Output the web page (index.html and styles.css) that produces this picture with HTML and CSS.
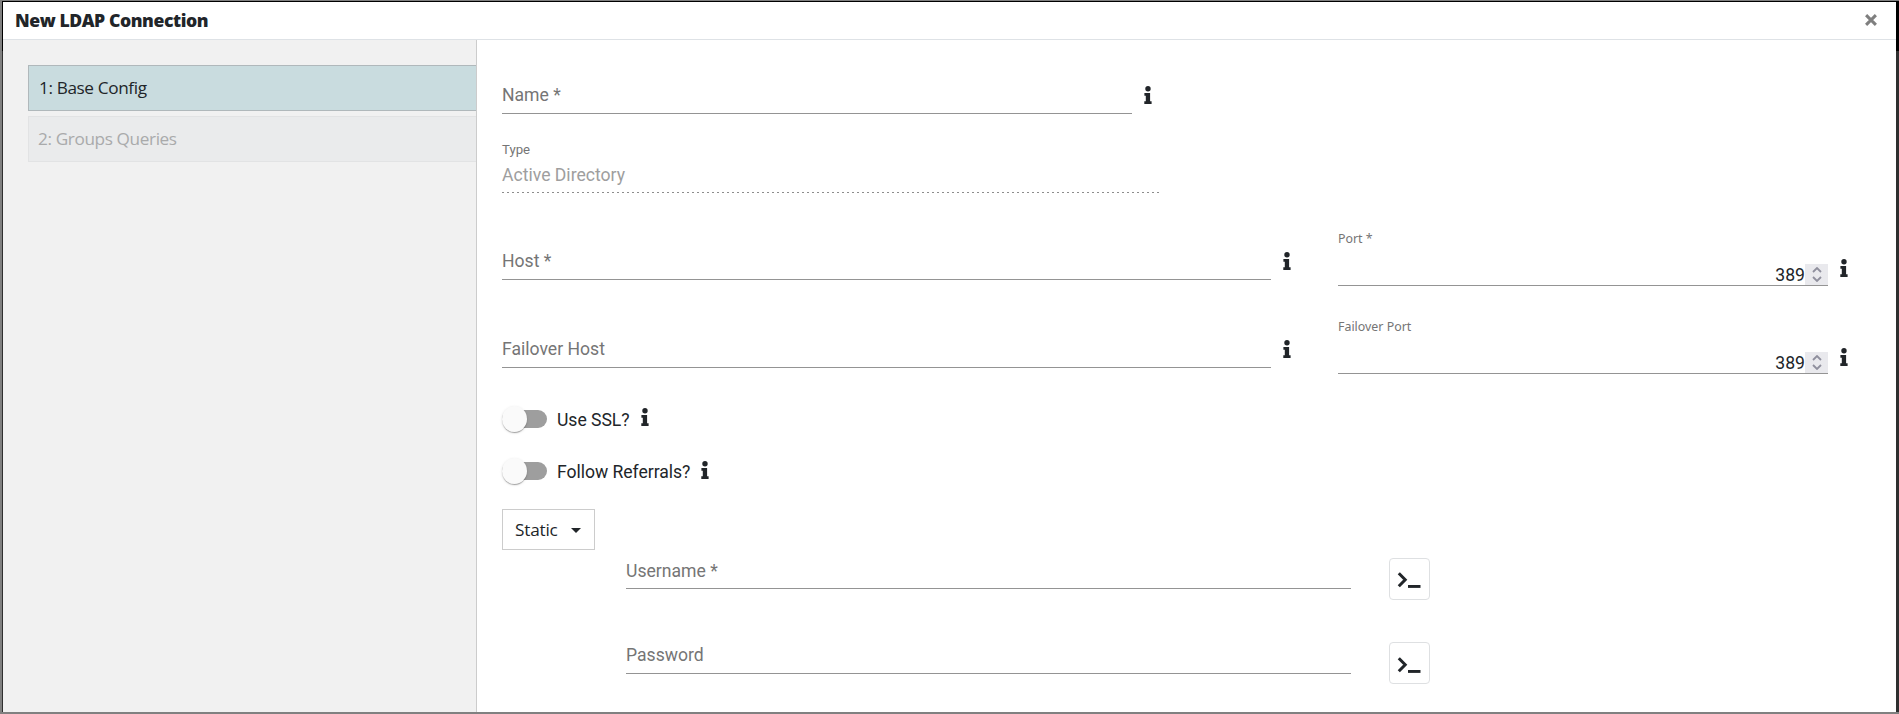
FILE: index.html
```
<!DOCTYPE html>
<html lang="en">
<head>
    <meta charset="UTF-8">
    <meta name="viewport" content="width=device-width, initial-scale=1.0">
    <title>New LDAP Connection</title>
    <link rel="stylesheet" href="styles.css">
</head>
<body>
    <svg class="sprite" aria-hidden="true">
        <symbol id="info" viewBox="0 0 8 18">
            <circle cx="4" cy="2.8" r="2.7"/>
            <path d="M.4 7h5.7v8.3h1.5v2.7H.3v-2.7h1.5V9.7H.4z"/>
        </symbol>
        <symbol id="terminal" viewBox="0 0 24 18">
            <path d="M1.8 2.2 8.2 8.7 1.8 15.2" fill="none" stroke="currentColor" stroke-width="3"/>
            <path d="M11 14h12.5v2.9H11z"/>
        </symbol>
        <symbol id="spin" viewBox="0 0 10 15">
            <path d="M1 5l4-4 4 4M1 10l4 4 4-4" fill="none" stroke="currentColor" stroke-width="1.8"/>
        </symbol>
    </svg>

    <div class="modal">
        <div class="modal-header">
            <h1 class="title">New LDAP Connection</h1>
            <svg class="close" viewBox="0 0 12 12"><path d="M1.1 1.1l9.8 9.8M10.9 1.1l-9.8 9.8"/></svg>
        </div>
        <div class="modal-body">
            <div class="sidebar">
                <div class="step active">1: Base Config</div>
                <div class="step disabled">2: Groups Queries</div>
            </div>
            <div class="form">
                <div class="row name-row">
                    <div class="field">Name *</div>
                    <svg class="info"><use href="#info"/></svg>
                </div>
                <div class="type-field">
                    <div class="type-label">Type</div>
                    <div class="type-value">Active Directory</div>
                    <div class="dotted"></div>
                </div>
                <div class="row host-row">
                    <div class="field">Host *</div>
                    <svg class="info"><use href="#info"/></svg>
                    <div class="port">
                        <div class="port-label">Port *</div>
                        <div class="port-value"><span class="number">389</span><span class="spinner"><svg><use href="#spin"/></svg></span></div>
                    </div>
                    <svg class="info port-info"><use href="#info"/></svg>
                </div>
                <div class="row host-row failover">
                    <div class="field">Failover Host</div>
                    <svg class="info"><use href="#info"/></svg>
                    <div class="port">
                        <div class="port-label">Failover Port</div>
                        <div class="port-value"><span class="number">389</span><span class="spinner"><svg><use href="#spin"/></svg></span></div>
                    </div>
                    <svg class="info port-info"><use href="#info"/></svg>
                </div>
                <div class="row toggle-row">
                    <div class="toggle"><div class="thumb"></div></div>
                    <span class="toggle-label">Use SSL?</span>
                    <svg class="info"><use href="#info"/></svg>
                </div>
                <div class="row toggle-row second">
                    <div class="toggle"><div class="thumb"></div></div>
                    <span class="toggle-label">Follow Referrals?</span>
                    <svg class="info"><use href="#info"/></svg>
                </div>
                <div class="dropdown">Static<span class="caret"></span></div>
                <div class="row login-row">
                    <div class="field">Username *</div>
                    <div class="cmd"><svg><use href="#terminal"/></svg></div>
                </div>
                <div class="row login-row password">
                    <div class="field">Password</div>
                    <div class="cmd"><svg><use href="#terminal"/></svg></div>
                </div>
            </div>
        </div>
    </div>
</body>
</html>
```
FILE: styles.css
```
* {
    box-sizing: border-box;
    margin: 0;
    padding: 0;
}

body {
    width: 1899px;
    height: 714px;
    overflow: hidden;
    padding: 1px 0 2px 2px;
    background: #808080;
    font-family: Roboto, "Liberation Sans", sans-serif;
    font-size: 17.6px;
    line-height: 20px;
    color: #212529;
}

svg {
    display: block;
    fill: currentColor;
    flex-shrink: 0;
}

.sprite {
    display: none;
}

.modal {
    height: 711px;
    padding: 1px 3px 0 1px;
    background: linear-gradient(#000 50px, #2f2f2f 50px);
}

.modal-header {
    display: flex;
    justify-content: space-between;
    height: 38px;
    padding: 7px 19px 0 12px;
    background: #fff;
    border-bottom: 1px solid #dee2e6;
}

.title {
    font-family: "Open Sans", "Noto Sans", sans-serif;
    font-size: 17.6px;
    font-weight: 800;
    line-height: 22px;
    letter-spacing: -0.42px;
}

.close {
    width: 12px;
    height: 12px;
    margin-top: 5px;
    stroke: #7f7f7f;
    stroke-width: 3;
}

.modal-body {
    display: flex;
    height: 672px;
}

.sidebar {
    width: 474px;
    padding: 25px 0 0 25px;
    background: #f1f1f1;
    border-right: 1px solid #ccc;
    font-family: "Open Sans", "Noto Sans", sans-serif;
}

.step {
    height: 46px;
    padding-left: 10px;
    font-size: 17.2px;
    line-height: 43px;
    letter-spacing: -0.38px;
    border: 1px solid #b0b8bb;
    border-right: none;
    margin-bottom: 5px;
}

.step.active {
    background: #c9dcdf;
}

.step.disabled {
    padding-left: 9px;
    background: #eaebec;
    border-color: #e2e3e4;
    color: #a9aaab;
}

.form {
    flex: 1;
    padding: 45px 0 0 25px;
    background: #fff;
}

.row {
    display: flex;
}

.field {
    height: 29px;
    border-bottom: 1px solid #949494;
    color: #757575;
}

.info {
    width: 8px;
    height: 18px;
    margin: 1px 0 0 12px;
}

.name-row .field {
    width: 630px;
}

.type-field {
    width: 658px;
    height: 50px;
    margin-top: 29px;
}

.type-label {
    font-size: 13.2px;
    line-height: 14px;
    color: #757575;
}

.type-value {
    margin-top: 8px;
    color: #9e9e9e;
}

.dotted {
    height: 1px;
    margin-top: 7px;
    background: repeating-linear-gradient(to right, #8c8c8c 0 2px, transparent 2px 5px);
}

.host-row {
    height: 56px;
    margin-top: 37px;
}

.host-row.failover {
    margin-top: 32px;
}

.host-row .field {
    width: 769px;
    margin-top: 21px;
}

.host-row .info {
    margin-top: 22px;
}

.port {
    width: 490px;
    margin-left: 47px;
    border-bottom: 1px solid #949494;
}

.port-label {
    font-family: "Noto Sans", sans-serif;
    font-size: 12.4px;
    line-height: 18px;
    color: #757575;
}

.port-value {
    display: flex;
    justify-content: flex-end;
    margin-top: 16px;
}

.number {
    line-height: 23px;
    height: 21px;
}

.spinner {
    width: 23px;
    height: 21px;
    padding: 3px 0 0 7px;
    background: #e9e9ed;
    color: #8f8f9d;
}

.spinner svg {
    width: 10px;
    height: 15px;
}

.host-row .port-info {
    margin-top: 29px;
}

.failover .port-info {
    margin-top: 30px;
}

.toggle-row {
    height: 25px;
    margin-top: 32px;
}

.toggle-row.second {
    margin-top: 27px;
}

.toggle {
    width: 45px;
    height: 18px;
    margin-top: 4px;
    border-radius: 9px;
    background: #9e9e9e;
}

.thumb {
    width: 25px;
    height: 26px;
    margin-top: -4px;
    border-radius: 50%;
    background: #fafafa;
    box-shadow: 0 2px 1px -1px rgba(0, 0, 0, 0.2), 0 1px 1px rgba(0, 0, 0, 0.14), 0 1px 3px rgba(0, 0, 0, 0.12);
}

.toggle-label {
    margin: 4px 0 0 10px;
    letter-spacing: -0.04px;
}

.toggle-row .info {
    margin: 2px 0 0 11px;
}

.toggle-row.second .info {
    margin-top: 3px;
}

.dropdown {
    display: flex;
    align-items: center;
    justify-content: space-between;
    width: 93px;
    height: 41px;
    margin-top: 26px;
    padding: 0 13px 0 12px;
    border: 1px solid #ccc;
    font-family: "Open Sans", "Noto Sans", sans-serif;
    font-size: 17.2px;
    letter-spacing: -0.2px;
}

.caret {
    margin-top: 2px;
    border: 5px solid transparent;
    border-top-color: #212529;
    border-bottom: none;
}

.login-row {
    height: 42px;
    margin: 8px 0 0 124px;
}

.login-row.password {
    margin-top: 42px;
}

.login-row .field {
    width: 725px;
    height: 28px;
    margin-top: 3px;
}

.password .field {
    height: 29px;
}

.cmd {
    width: 41px;
    height: 42px;
    margin-left: 38px;
    padding: 12px 0 0 7px;
    border: 1px solid #dee0e2;
    border-radius: 4px;
}

.password .cmd {
    padding-top: 13px;
}

.cmd svg {
    width: 24px;
    height: 18px;
}
```
